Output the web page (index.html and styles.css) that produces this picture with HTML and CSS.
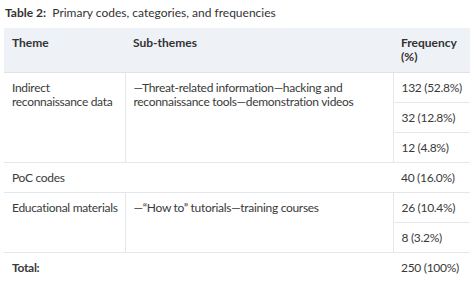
FILE: index.html
```html
<!DOCTYPE html>
<html>
<head>
<meta charset="utf-8">
<link rel="stylesheet" href="styles.css">
</head>
<body>
<div class="wrap">
  <div class="caption"><span class="label">Table 2:</span>&nbsp; Primary codes, categories, and frequencies</div>
  <table class="tbl">
    <colgroup>
      <col class="c1">
      <col class="c2">
      <col class="c3">
    </colgroup>
    <thead>
      <tr>
        <th>Theme</th>
        <th>Sub-themes</th>
        <th>Frequency (%)</th>
      </tr>
    </thead>
    <tbody>
      <tr>
        <td rowspan="3" class="span theme">Indirect reconnaissance data</td>
        <td rowspan="3" class="span">—Threat-related information—hacking and reconnaissance tools—demonstration videos</td>
        <td class="num">132 (52.8%)</td>
      </tr>
      <tr><td class="num">32 (12.8%)</td></tr>
      <tr><td class="num">12 (4.8%)</td></tr>
      <tr>
        <td colspan="2">PoC codes</td>
        <td class="num">40 (16.0%)</td>
      </tr>
      <tr>
        <td rowspan="2" class="span theme">Educational materials</td>
        <td rowspan="2" class="span">—“How to” tutorials—training courses</td>
        <td class="num">26 (10.4%)</td>
      </tr>
      <tr><td class="num">8 (3.2%)</td></tr>
      <tr class="total">
        <td colspan="2"><strong>Total:</strong></td>
        <td class="num">250 (100%)</td>
      </tr>
    </tbody>
  </table>
</div>
</body>
</html>
```

FILE: styles.css
```css
html, body {
  margin: 0;
  padding: 0;
  background: #ffffff;
}
body {
  font-family: "Lato", "Liberation Sans", sans-serif;
  font-size: 12px;
  color: #3a3a3a;
}
.wrap {
  padding: 0 4px;
}
.caption {
  padding: 6px 0 8px 1px;
  line-height: 14px;
  color: #333;
}
.caption .label {
  font-weight: 700;
}
.tbl {
  width: 466px;
  table-layout: fixed;
  border-collapse: collapse;
  border-bottom: 3px solid #eceff3;
}
.c1 { width: 121px; }
.c2 { width: 268px; }
.c3 { width: 77px; }
.tbl th {
  background: #eef2f7;
  text-align: left;
  font-weight: 700;
  vertical-align: top;
  padding: 8px 8px;
  line-height: 14px;
  color: #333;
  border-bottom: 1px solid #dfe3e8;
}
.tbl td {
  vertical-align: top;
  padding: 8px 8px 7px;
  line-height: 14px;
  letter-spacing: -0.3px;
  border-bottom: 1px solid #e3e6ea;
}
.tbl td.num {
  white-space: nowrap;
}
.tbl td.theme {
  padding-right: 2px;
}
.tbl td.span {
  border-right: 1px solid #e3e6ea;
}
.tbl .total td {
  border-bottom: none;
}
```
